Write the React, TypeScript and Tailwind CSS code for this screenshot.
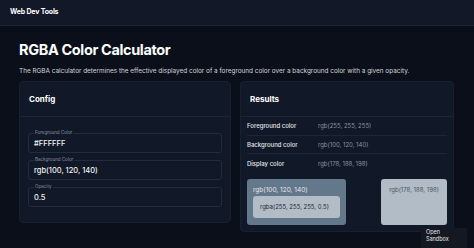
import React from "react";

const fields = [
  { label: "Foreground Color", value: "#FFFFFF" },
  { label: "Background Color", value: "rgb(100, 120, 140)" },
  { label: "Opacity", value: "0.5" },
];

const results = [
  { label: "Foreground color", value: "rgb(255, 255, 255)" },
  { label: "Background color", value: "rgb(100, 120, 140)" },
  { label: "Display color", value: "rgb(178, 188, 198)" },
];

export default function App() {
  return (
    <div className="relative w-[474px] h-[248px] overflow-hidden bg-[#0b0f19] text-white font-['Inter','Liberation_Sans',sans-serif]">
      <header className="h-[26px] flex items-center px-[10px] bg-[#121827] border-b border-[#1e2636]">
        <span className="text-[7px] font-bold tracking-tight">Web Dev Tools</span>
      </header>

      <main className="px-[19px]">
        <h1 className="pt-[16px] text-[14.5px] leading-[15px] font-bold tracking-tight">RGBA Color Calculator</h1>
        <p className="mt-[10px] text-[6.4px] leading-[8px] text-[#d1d5db]">
          The RGBA calculator determines the effective displayed color of a foreground color over a background color with a given opacity.
        </p>

        <div className="mt-[6px] grid grid-cols-[212px_214px] gap-[9px] items-start">
          <section className="rounded-[4px] bg-[#111827] border border-[#182030]">
            <div className="h-[35px] flex items-center px-[9px] border-b border-[#1e2636]">
              <h2 className="text-[8px] font-bold">Config</h2>
            </div>
            <div className="px-[8px] pt-[13px] pb-[15px] flex flex-col gap-[4px]">
              {fields.map((f) => (
                <fieldset key={f.label} className="border border-[#232c3c] rounded-[3px] px-[5px] pb-[4px]">
                  <legend className="px-[1px] text-[4.5px] leading-[6px] text-[#8b93a3]">{f.label}</legend>
                  <div className="pt-[3px] text-[7.5px] leading-[9px] text-[#f3f4f6] font-medium">{f.value}</div>
                </fieldset>
              ))}
            </div>
          </section>

          <section className="rounded-[4px] bg-[#111827] border border-[#182030]">
            <div className="h-[35px] flex items-center px-[9px] border-b border-[#1e2636]">
              <h2 className="text-[8px] font-bold">Results</h2>
            </div>
            <div className="px-[6px]">
              {results.map((r, i) => (
                <div key={r.label} className={`flex items-center h-[18.5px] ${i < 2 ? "border-b border-[#1e2636]" : ""}`}>
                  <span className="w-[71px] text-[6px] font-medium text-[#e5e7eb]">{r.label}</span>
                  <span className="text-[6px] text-[#8b93a3]">{r.value}</span>
                </div>
              ))}
            </div>
            <div className="px-[6px] pt-[6px] pb-[6px] flex justify-between">
              <div className="w-[99px] h-[46px] rounded-[3px] bg-[rgb(100,120,140)] px-[6px] pt-[7px]">
                <div className="text-[6.5px] leading-[8px] text-[#e5e7eb]">rgb(100, 120, 140)</div>
                <div className="mt-[2px] h-[22px] rounded-[3px] bg-[rgba(255,255,255,0.5)] flex items-center px-[7px] text-[6px] text-[#1f2937]">
                  rgba(255, 255, 255, 0.5)
                </div>
              </div>
              <div className="w-[66px] h-[46px] rounded-[3px] bg-[rgb(178,188,198)] pt-[7px] text-center text-[6px] leading-[8px] text-[#4b5563]">
                rgb(178, 188, 198)
              </div>
            </div>
          </section>
        </div>
      </main>

      <div className="absolute right-[7px] bottom-0 w-[46px] h-[20px] bg-[#141821] pl-[5px] pt-[1px] text-[5.5px] leading-[7px] text-[#e5e7eb]">
        Open
        <br />
        Sandbox
      </div>
    </div>
  );
}
